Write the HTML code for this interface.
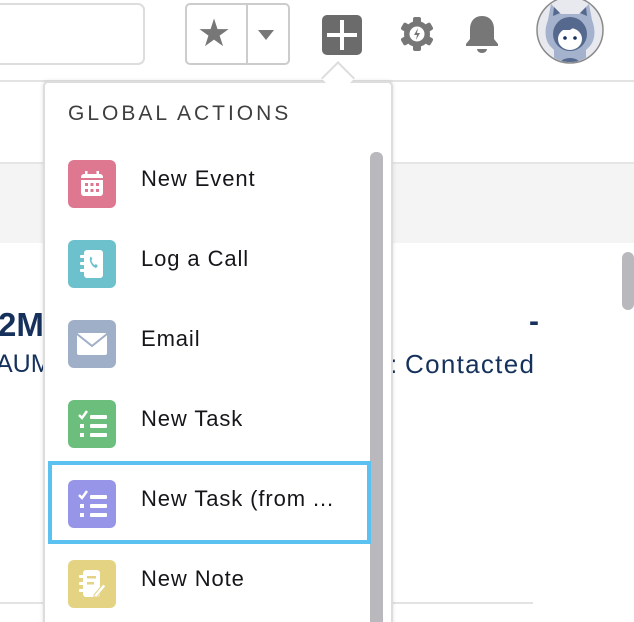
<!DOCTYPE html>
<html><head><meta charset="utf-8"><style>
*{margin:0;padding:0;box-sizing:border-box}
html,body{width:634px;height:622px;overflow:hidden}
body{background:#fff;font-family:"Liberation Sans",sans-serif;position:relative}
.abs{position:absolute}
.item{position:absolute;left:68px;width:300px;height:48px}
.ic{position:absolute;left:0;top:0;width:48px;height:48px;border-radius:6px}
.lbl{position:absolute;left:73px;top:6px;font-size:22px;letter-spacing:0.9px;color:#16161a;white-space:nowrap}
</style></head><body>
<!-- header -->
<div class="abs" style="left:-10px;top:3px;width:155px;height:62px;border:2px solid #ddd;border-radius:7px"></div>
<div class="abs" style="left:185px;top:3px;width:105px;height:62px;border:2px solid #ccc;border-radius:5px"></div>
<div class="abs" style="left:246px;top:4px;width:2px;height:60px;background:#ccc"></div>
<div class="abs" style="left:197px;top:14px;font-size:38px;color:#777;line-height:40px">★</div>
<div class="abs" style="left:258px;top:30px;width:0;height:0;border-left:8px solid transparent;border-right:8px solid transparent;border-top:10px solid #777"></div>
<div class="abs" style="left:322px;top:15px;width:40px;height:40px;background:#6b6b6b;border-radius:5px"></div>
<div class="abs" style="left:340px;top:20px;width:4px;height:30px;background:#fff"></div>
<div class="abs" style="left:327px;top:33px;width:30px;height:4px;background:#fff"></div>
<svg class="abs" style="left:399px;top:14px" width="36" height="40" viewBox="0 0 36 40">
<g fill="#777"><circle cx="18" cy="20" r="13"/>
<rect x="14" y="3" width="8" height="8" rx="2"/><rect x="14" y="29" width="8" height="8" rx="2"/>
<rect x="14" y="3" width="8" height="8" rx="2" transform="rotate(60 18 20)"/><rect x="14" y="3" width="8" height="8" rx="2" transform="rotate(120 18 20)"/>
<rect x="14" y="3" width="8" height="8" rx="2" transform="rotate(240 18 20)"/><rect x="14" y="3" width="8" height="8" rx="2" transform="rotate(300 18 20)"/></g>
<circle cx="18" cy="20" r="7.5" fill="#fff"/><path d="M19 14l-4 7h3l-1 5 4-7h-3z" fill="#777"/></svg>
<svg class="abs" style="left:462px;top:14px" width="40" height="40" viewBox="0 0 40 40">
<path d="M20 2c-8 0-12 6-12 13v10l-4 5v2h32v-2l-4-5V15c0-7-4-13-12-13z" fill="#777"/><path d="M15 35h10a5 4 0 0 1-10 0z" fill="#777"/></svg>
<svg class="abs" style="left:536px;top:-4px" width="68" height="68" viewBox="0 0 68 68">
<defs><clipPath id="c"><circle cx="34" cy="34" r="32"/></clipPath></defs>
<circle cx="34" cy="34" r="33" fill="#e8e9ee" stroke="#8a8a8a" stroke-width="1.5"/>
<g clip-path="url(#c)">
<path d="M12 24l3-16 10 10h18l10-10 3 16c4 10 3 20-2 26l-4 4v20H18V54l-4-4c-5-6-6-16-2-26z" fill="#a4b2cd"/>
<path d="M17 20l1-9 6 6zM51 20l-1-9-6 6z" fill="#54698d"/>
<circle cx="34" cy="38" r="17" fill="#54698d"/>
<ellipse cx="34" cy="43" rx="12" ry="11" fill="#fff"/>
<path d="M22 34c4-6 10-8 18-4l-6 4z" fill="#54698d"/>
<circle cx="29" cy="42" r="1.8" fill="#16325c"/><circle cx="39" cy="42" r="1.8" fill="#16325c"/>
<ellipse cx="34" cy="68" rx="10" ry="6" fill="#54698d"/></g></svg>
<div class="abs" style="left:0;top:80px;width:634px;height:2px;background:#e3e3e3"></div>
<!-- band -->
<div class="abs" style="left:0;top:162px;width:634px;height:81px;background:#f4f4f4;border-top:2px solid #e5e5e5"></div>
<!-- background content -->
<div class="abs" style="left:-2px;top:306px;font-size:33px;font-weight:bold;color:#16325c">2M</div>
<div class="abs" style="left:-4px;top:350px;font-size:25px;color:#16325c">AUM</div>
<div class="abs" style="left:529px;top:305px;font-size:30px;font-weight:bold;color:#16325c">-</div>
<div class="abs" style="left:390px;top:349px;font-size:26px;color:#16325c">:</div>
<div class="abs" style="left:405px;top:349px;font-size:26px;letter-spacing:1.3px;color:#16325c">Contacted</div>
<div class="abs" style="left:0;top:602px;width:533px;height:2px;background:#e3e3e3"></div>
<div class="abs" style="left:622px;top:252px;width:12px;height:58px;background:#b9b9bd;border-radius:6px"></div>
<!-- popover -->
<div class="abs" style="left:43px;top:81px;width:350px;height:545px;background:#fff;border:2px solid #ddd;border-bottom:none;border-radius:5px 5px 0 0;box-shadow:0 0 4px rgba(0,0,0,.12)"></div>
<div class="abs" style="left:326px;top:66px;width:24px;height:24px;background:#fff;border-left:2px solid #ddd;border-top:2px solid #ddd;transform:rotate(45deg)"></div>
<div class="abs" style="left:68px;top:102px;font-size:21px;letter-spacing:3px;color:#3e3e3c">GLOBAL ACTIONS</div>
<div class="abs" style="left:370px;top:152px;width:13px;height:474px;background:#b9b9bd;border-radius:6px 6px 0 0"></div>
<div class="abs" style="left:48px;top:461px;width:323px;height:83px;border:4px solid #5bc1f0"></div>

<div class="item" style="top:160px"><div class="ic" style="background:#de7890"></div>
<svg class="abs" style="left:12px;top:10px" width="24" height="28"><rect x="1" y="4" width="22" height="22" rx="3" fill="#fff"/><rect x="5" y="1" width="2.5" height="6" fill="#fff"/><rect x="16.5" y="1" width="2.5" height="6" fill="#fff"/><g fill="#de7890"><rect x="1" y="8" width="22" height="2"/><rect x="5" y="13" width="3" height="3"/><rect x="10.5" y="13" width="3" height="3"/><rect x="16" y="13" width="3" height="3"/><rect x="5" y="19" width="3" height="3"/><rect x="10.5" y="19" width="3" height="3"/><rect x="16" y="19" width="3" height="3"/></g></svg>
<div class="lbl">New Event</div></div>

<div class="item" style="top:240px"><div class="ic" style="background:#6dc1cc"></div>
<svg class="abs" style="left:12px;top:9px" width="26" height="30"><rect x="4" y="1" width="19" height="28" rx="3" fill="#fff"/><g fill="#fff"><rect x="0" y="6" width="6" height="3" rx="1"/><rect x="0" y="13" width="6" height="3" rx="1"/><rect x="0" y="20" width="6" height="3" rx="1"/></g><path d="M10 9c-1 3 2 9 6 10l2-2-2-2-1.5 1c-1.5-1-3-3-3-5l1-1.5-2-2z" fill="#6dc1cc"/></svg>
<div class="lbl">Log a Call</div></div>

<div class="item" style="top:320px"><div class="ic" style="background:#9fafc7"></div>
<svg class="abs" style="left:8px;top:12px" width="32" height="24"><rect x="1" y="1" width="30" height="22" rx="2" fill="#fff"/><path d="M1 2l15 12 15-12" fill="none" stroke="#9fafc7" stroke-width="2"/></svg>
<div class="lbl">Email</div></div>

<div class="item" style="top:400px"><div class="ic" style="background:#6bbe7b"></div>
<svg class="abs" style="left:10px;top:10px" width="30" height="28"><path d="M1 5l3 3 5-7" fill="none" stroke="#fff" stroke-width="2.5"/><g fill="#fff"><rect x="12" y="5" width="17" height="4" rx="1"/><rect x="12" y="14" width="17" height="4" rx="1"/><rect x="12" y="23" width="17" height="4" rx="1"/><rect x="2" y="14" width="4" height="4"/><rect x="2" y="23" width="4" height="4"/></g></svg>
<div class="lbl">New Task</div></div>

<div class="item" style="top:480px"><div class="ic" style="background:#9695e8"></div>
<svg class="abs" style="left:10px;top:10px" width="30" height="28"><path d="M1 5l3 3 5-7" fill="none" stroke="#fff" stroke-width="2.5"/><g fill="#fff"><rect x="12" y="5" width="17" height="4" rx="1"/><rect x="12" y="14" width="17" height="4" rx="1"/><rect x="12" y="23" width="17" height="4" rx="1"/><rect x="2" y="14" width="4" height="4"/><rect x="2" y="23" width="4" height="4"/></g></svg>
<div class="lbl">New Task (from ...</div></div>

<div class="item" style="top:560px"><div class="ic" style="background:#e3d382"></div>
<svg class="abs" style="left:10px;top:9px" width="30" height="30"><rect x="5" y="1" width="17" height="27" rx="3" fill="#fff"/><g fill="#fff"><rect x="1" y="6" width="6" height="3" rx="1"/><rect x="1" y="13" width="6" height="3" rx="1"/><rect x="1" y="20" width="6" height="3" rx="1"/></g><g fill="#e3d382"><rect x="9" y="7" width="9" height="2.5"/><rect x="9" y="13" width="7" height="2.5"/></g><path d="M16 26l9-11 3 2-9 11h-3z" fill="#fff" stroke="#e3d382" stroke-width="1"/></svg>
<div class="lbl">New Note</div></div>
</body></html>
